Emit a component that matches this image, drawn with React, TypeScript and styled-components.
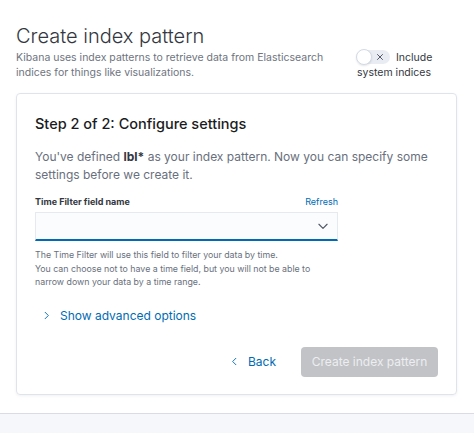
import React from "react";
import styled, { createGlobalStyle } from "styled-components";

const Global = createGlobalStyle`
  html, body { margin: 0; padding: 0; background: #fff; }
  body { font-family: Inter, "Noto Sans", sans-serif; color: #343741; }
  * { box-sizing: border-box; }
`;

const Page = styled.div`
  width: 474px;
  height: 433px;
  display: flex;
  flex-direction: column;
  overflow: hidden;
`;

const Content = styled.div`
  padding: 22px 17px 0 16px;
`;

const Title = styled.h1`
  margin: 0;
  font-size: 20px;
  font-weight: 300;
  line-height: 28px;
  color: #343741;
`;

const HeaderRow = styled.div`
  display: flex;
  justify-content: space-between;
  align-items: flex-start;
`;

const Subtitle = styled.p`
  margin: 0;
  font-size: 10.5px;
  line-height: 15px;
  color: #6e7480;
  width: 320px;
`;

const ToggleBlock = styled.div`
  width: 100px;
  font-size: 10.5px;
  line-height: 15px;
  color: #343741;
`;

const Switch = styled.span`
  display: inline-block;
  width: 33px;
  height: 14px;
  border-radius: 7px;
  background: #e9edf3;
  position: relative;
  vertical-align: middle;
  margin-right: 6px;
  margin-top: -2px;

  svg { display: block; }
`;

const Knob = styled.span`
  position: absolute;
  left: -1px;
  top: -1px;
  width: 16px;
  height: 16px;
  border-radius: 50%;
  background: #fff;
  border: 1px solid #d3dae6;
  box-shadow: 0 1px 2px rgba(0, 0, 0, 0.1);
`;

const Panel = styled.div`
  margin-top: 13px;
  border: 1px solid #dfe3ea;
  border-radius: 4px;
  box-shadow: 0 1px 3px rgba(0, 0, 0, 0.06);
  padding: 20px 18px 17px 18px;
`;

const StepTitle = styled.h2`
  margin: 0;
  font-size: 14.5px;
  font-weight: 500;
  line-height: 20px;
  color: #1a1c21;
`;

const Lead = styled.p`
  margin: 14px 0 0;
  font-size: 12px;
  line-height: 18px;
  color: #69707d;
  b { color: #343741; font-weight: 700; }
`;

const FormRow = styled.div`
  width: 303px;
  margin-top: 11px;
`;

const LabelRow = styled.div`
  display: flex;
  justify-content: space-between;
  align-items: center;
  height: 12px;
  font-size: 9px;
`;

const Label = styled.label`
  font-weight: 700;
  color: #343741;
`;

const LinkText = styled.span`
  color: #006bb4;
`;

const Select = styled.div`
  margin-top: 5px;
  height: 29px;
  background: #fbfcfd;
  border: 1px solid #e6e9ee;
  border-bottom: 2px solid #006bb4;
  display: flex;
  align-items: center;
  justify-content: flex-end;
  padding-right: 7px;
`;

const Help = styled.div`
  margin-top: 7px;
  font-size: 8.8px;
  line-height: 13.5px;
  color: #69707d;
`;

const Advanced = styled.div`
  margin-top: 19px;
  margin-left: 6px;
  display: flex;
  align-items: center;
  gap: 8px;
  font-size: 12px;
  line-height: 16px;
  color: #006bb4;
`;

const Actions = styled.div`
  margin-top: 23px;
  display: flex;
  justify-content: flex-end;
  align-items: center;
  gap: 25px;
`;

const BackButton = styled.button`
  border: 0;
  background: none;
  display: flex;
  align-items: center;
  gap: 8px;
  font-family: inherit;
  font-size: 12px;
  color: #006bb4;
  padding: 0;
`;

const PrimaryButton = styled.button`
  width: 137px;
  height: 30px;
  border: 0;
  border-radius: 4px;
  background: #c2c3c6;
  color: #eceef1;
  font-family: inherit;
  font-size: 12px;
  padding: 0;
`;

const Footer = styled.div`
  flex: 1;
  margin-top: 18px;
  border-top: 1px solid #dadbe6;
  background: #f5f7fa;
`;

const Chevron = ({ dir, size = 12, color = "#343741" }: { dir: "down" | "right" | "left"; size?: number; color?: string }) => {
  const d = dir === "down" ? "M2.5 4.5 L6 8 L9.5 4.5" : dir === "right" ? "M4.5 2.5 L8 6 L4.5 9.5" : "M7.5 2.5 L4 6 L7.5 9.5";
  return (
    <svg width={size} height={size} viewBox="0 0 12 12" fill="none">
      <path d={d} stroke={color} strokeWidth="1" strokeLinecap="round" strokeLinejoin="round" />
    </svg>
  );
};

export default function App() {
  return (
    <Page>
      <Global />
      <Content>
        <Title>Create index pattern</Title>
        <HeaderRow>
          <Subtitle>
            Kibana uses index patterns to retrieve data from Elasticsearch indices for things like visualizations.
          </Subtitle>
          <ToggleBlock>
            <Switch>
              <Knob />
              <svg width="33" height="14" viewBox="0 0 33 14">
                <path d="M20.5 4.5 L25.5 9.5 M25.5 4.5 L20.5 9.5" stroke="#535966" strokeWidth="1" strokeLinecap="round" />
              </svg>
            </Switch>
            Include system indices
          </ToggleBlock>
        </HeaderRow>
        <Panel>
          <StepTitle>Step 2 of 2: Configure settings</StepTitle>
          <Lead>
            You've defined <b>lbl*</b> as your index pattern. Now you can specify some settings before we create it.
          </Lead>
          <FormRow>
            <LabelRow>
              <Label>Time Filter field name</Label>
              <LinkText>Refresh</LinkText>
            </LabelRow>
            <Select>
              <Chevron dir="down" size={14} color="#535966" />
            </Select>
            <Help>
              The Time Filter will use this field to filter your data by time.
              <br />
              You can choose not to have a time field, but you will not be able to narrow down your data by a time range.
            </Help>
          </FormRow>
          <Advanced>
            <Chevron dir="right" size={11} color="#006bb4" />
            Show advanced options
          </Advanced>
          <Actions>
            <BackButton>
              <Chevron dir="left" size={11} color="#006bb4" />
              Back
            </BackButton>
            <PrimaryButton>Create index pattern</PrimaryButton>
          </Actions>
        </Panel>
      </Content>
      <Footer />
    </Page>
  );
}
